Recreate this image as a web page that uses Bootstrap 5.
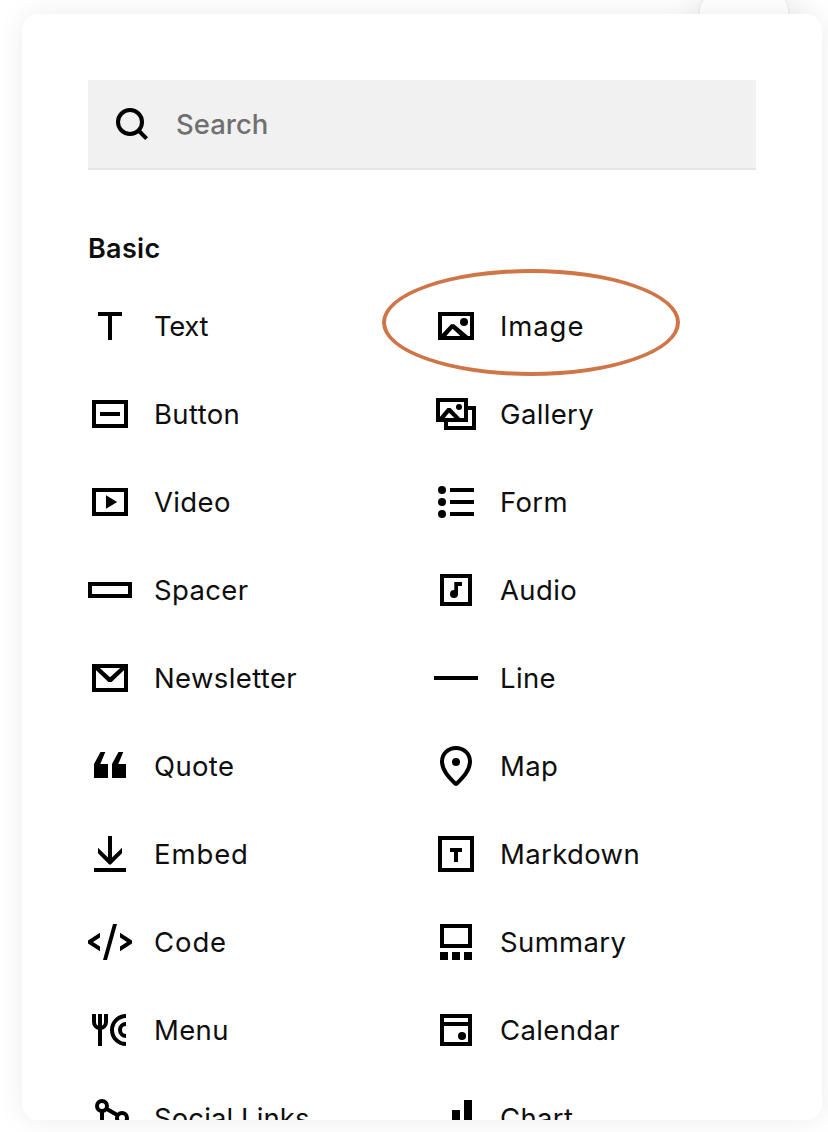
<!DOCTYPE html>
<html lang="en">
<head>
<meta charset="utf-8">
<meta name="viewport" content="width=device-width, initial-scale=1">
<title>Add block</title>
<link href="https://cdn.jsdelivr.net/npm/bootstrap@5.3.0/dist/css/bootstrap.min.css" rel="stylesheet">
<style>
body{font-family:Inter,"Liberation Sans",sans-serif;font-size:27.5px;letter-spacing:.36px;line-height:44px;color:#0e0e0e;background:#fff}
.stage{height:1132px;padding:14px 6px 12px 22px}
.toolbar-tab{top:-7px;left:700px;width:88px;height:60px;border-radius:18px;background:#fff;box-shadow:0 0 0 1.5px rgba(0,0,0,.035),0 4px 40px rgba(0,0,0,.11)}
.panel{border-radius:16px;padding:66px 66px 0;box-shadow:0 0 28px rgba(0,0,0,.075)}
.search{height:90px;background:#f1f1f1;border-bottom:2px solid #e5e5e5;padding-left:22px;gap:22px;color:#707070}
.search .label{font-weight:500;letter-spacing:0}
.heading{margin-top:57px;font-size:27px;line-height:44px;font-weight:600;letter-spacing:.3px;color:#0e0e0e}
.blocks{margin-top:33px;row-gap:44px;display:grid;grid-template-columns:346px 1fr}
.block-item{height:44px;gap:22px}
.ico{width:44px;height:44px;flex:none;color:#000;fill:currentColor}
.ico .o{fill:none;stroke:currentColor;stroke-width:4}
.ring{left:-52px;top:-35px;width:298px;height:107px;border:4px solid #cf7648;border-radius:50%}
.label{white-space:nowrap}
.label.tight{letter-spacing:-.35px}
.label.wide{letter-spacing:.9px}
</style>
</head>
<body>
<main class="stage position-relative overflow-hidden">
<div class="toolbar-tab position-absolute"></div>
<section class="panel bg-white h-100 position-relative overflow-hidden">
<div class="search d-flex align-items-center">
<svg class="ico" viewBox="0 0 44 44"><circle class="o" cx="20" cy="20" r="12"/><path class="o" d="M28.5 28.5L36.6 36.6"/></svg>
<span class="label">Search</span>
</div>
<h2 class="heading mb-0">Basic</h2>
<div class="blocks">
<div class="block-item d-flex align-items-center"><svg class="ico" viewBox="0 0 44 44"><path d="M10 8H34V12H24V36H20V12H10Z"/></svg><span class="label tight">Text</span></div>
<div class="block-item d-flex align-items-center position-relative"><svg class="ico" viewBox="0 0 44 44"><rect class="o" x="6" y="10" width="32" height="24"/><circle cx="30" cy="18" r="4"/><path d="M7 31L17 20.2H20.2L34 32V34H28.5L18.6 24.8L10.5 34H7Z"/></svg><span class="label wide">Image</span><span class="ring position-absolute"></span></div>
<div class="block-item d-flex align-items-center"><svg class="ico" viewBox="0 0 44 44"><rect class="o" x="6" y="10" width="32" height="24"/><path d="M12 20H32V24H12Z"/></svg><span class="label">Button</span></div>
<div class="block-item d-flex align-items-center"><svg class="ico" viewBox="0 0 44 44"><rect class="o" x="4" y="8" width="28" height="20"/><path class="o" d="M34 16H40V36H12V30"/><circle cx="25" cy="15" r="3"/><path d="M5 26L13.5 16H16.5L27 27V28H22.5L15 20.8L9 28H5Z"/></svg><span class="label">Gallery</span></div>
<div class="block-item d-flex align-items-center"><svg class="ico" viewBox="0 0 44 44"><rect class="o" x="6" y="10" width="32" height="24"/><path d="M18 15.3L29.2 22L18 28.7Z"/></svg><span class="label">Video</span></div>
<div class="block-item d-flex align-items-center"><svg class="ico" viewBox="0 0 44 44"><circle cx="8" cy="10" r="4"/><circle cx="8" cy="22" r="4"/><circle cx="8" cy="34" r="4"/><path d="M16 8H40V12H16ZM16 20H40V24H16ZM16 32H40V36H16Z"/></svg><span class="label">Form</span></div>
<div class="block-item d-flex align-items-center"><svg class="ico" viewBox="0 0 44 44"><rect class="o" x="2" y="16" width="40" height="12"/></svg><span class="label">Spacer</span></div>
<div class="block-item d-flex align-items-center"><svg class="ico" viewBox="0 0 44 44"><rect class="o" x="8" y="8" width="28" height="28"/><circle cx="20" cy="26" r="4"/><path d="M20.3 14H28V18H24V26H20.3Z"/></svg><span class="label">Audio</span></div>
<div class="block-item d-flex align-items-center"><svg class="ico" viewBox="0 0 44 44"><rect class="o" x="6" y="10" width="32" height="24"/><path d="M5 11.200V9H8.500L22 21.300L35.500 9H39V11.200L23.600 26H20.400Z"/></svg><span class="label">Newsletter</span></div>
<div class="block-item d-flex align-items-center"><svg class="ico" viewBox="0 0 44 44"><path d="M0 20H44V24H0Z"/></svg><span class="label">Line</span></div>
<div class="block-item d-flex align-items-center"><svg class="ico" viewBox="0 0 44 44"><path d="M12.5 8H17.3L12.3 20H20V34H6V20ZM30.5 8H35.3L30.3 20H38V34H24V20Z"/></svg><span class="label">Quote</span></div>
<div class="block-item d-flex align-items-center"><svg class="ico" viewBox="0 0 44 44"><path class="o" stroke-linejoin="bevel" d="M22 4C14 4 8 10 8 17.5C8 26 14.5 33 22 40.3C29.5 33 36 26 36 17.5C36 10 30 4 22 4Z"/><circle cx="22" cy="18" r="4"/></svg><span class="label">Map</span></div>
<div class="block-item d-flex align-items-center"><svg class="ico" viewBox="0 0 44 44"><path d="M20 4H24V25.5L34 15.8V21.3L22.8 32.5H21.2L10 21.3V15.8L20 25.5ZM6 36H38V40H6Z"/></svg><span class="label wide">Embed</span></div>
<div class="block-item d-flex align-items-center"><svg class="ico" viewBox="0 0 44 44"><rect class="o" x="6" y="6" width="32" height="32"/><path d="M16 16H28V20H24V30H20V20H16Z"/></svg><span class="label">Markdown</span></div>
<div class="block-item d-flex align-items-center"><svg class="ico" viewBox="0 0 44 44"><path d="M12 12.7L0 20.5V23.5L12 31.3V26.5L5 22L12 17.5ZM32 12.7L44 20.5V23.5L32 31.3V26.5L39 22L32 17.5ZM25 4H29L19 40H15Z"/></svg><span class="label wide">Code</span></div>
<div class="block-item d-flex align-items-center"><svg class="ico" viewBox="0 0 44 44"><rect class="o" x="8" y="6" width="28" height="20"/><path d="M6 32H14V40H6ZM18 32H26V40H18ZM30 32H38V40H30Z"/></svg><span class="label">Summary</span></div>
<div class="block-item d-flex align-items-center"><svg class="ico" viewBox="0 0 44 44"><path class="o" d="M6 6V14A6 6 0 0 0 18 14V6M12 6V38M38 8A14 14 0 0 0 38 36M38 16A6 6 0 0 0 38 28"/></svg><span class="label">Menu</span></div>
<div class="block-item d-flex align-items-center"><svg class="ico" viewBox="0 0 44 44"><path class="o" d="M8 8H36V36H8ZM8 16H36"/><circle cx="28" cy="28" r="4"/></svg><span class="label">Calendar</span></div>
<div class="block-item d-flex align-items-center"><svg class="ico" viewBox="0 0 44 44"><circle class="o" cx="14" cy="10" r="5"/><circle class="o" cx="34" cy="22" r="5"/><circle class="o" cx="14" cy="36" r="5"/><path class="o" d="M18 12.5L30 19.5M14 15V31"/></svg><span class="label" style="letter-spacing:.1px">Social Links</span></div>
<div class="block-item d-flex align-items-center"><svg class="ico" viewBox="0 0 44 44"><path d="M6 24H14V40H6ZM18 14H26V40H18ZM30 4H38V40H30Z"/></svg><span class="label">Chart</span></div>
</div>
</section>
</main>
<script src="https://cdn.jsdelivr.net/npm/bootstrap@5.3.0/dist/js/bootstrap.bundle.min.js"></script>
</body>
</html>
